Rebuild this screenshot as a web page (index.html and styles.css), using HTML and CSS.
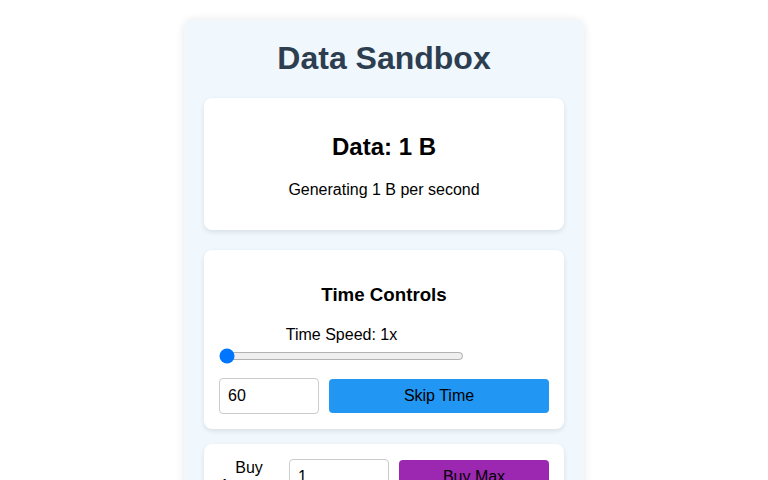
FILE: index.html
```html
<!DOCTYPE html>
<html>
<head>
<meta charset="utf-8">
<link rel="stylesheet" href="styles.css">
</head>
<body>
<div class="container">
  <h1 class="title">Data Sandbox</h1>
  <div class="card data-card">
    <h2 class="data-amount">Data: 1 B</h2>
    <p class="rate">Generating 1 B per second</p>
  </div>
  <div class="card time-card">
    <h3 class="card-title">Time Controls</h3>
    <div class="speed">
      <label class="speed-label" for="speed">Time Speed: 1x</label>
      <input class="speed-range" id="speed" type="range" min="1" max="10" value="1">
    </div>
    <div class="row">
      <input class="num-input" type="number" value="60">
      <button class="btn btn-blue">Skip Time</button>
    </div>
  </div>
  <div class="card buy-card">
    <div class="row">
      <label class="buy-label">Buy Amount:</label>
      <input class="num-input" type="number" value="1">
      <button class="btn btn-purple">Buy Max</button>
    </div>
  </div>
</div>
</body>
</html>
```
FILE: styles.css
```css
html, body {
  margin: 0;
  padding: 0;
  background: #ffffff;
}
body {
  font-family: "Liberation Sans", Arial, sans-serif;
  padding-top: 20px;
}
.container {
  width: 400px;
  box-sizing: border-box;
  margin: 0 auto;
  padding: 20px;
  background: #f0f7fd;
  border-radius: 10px;
  box-shadow: 0 0 10px rgba(0, 0, 0, 0.1);
}
.title {
  margin: 0 0 21px;
  font-size: 32px;
  text-align: center;
  color: #2c3e50;
}
.card {
  background: #ffffff;
  border-radius: 8px;
  padding: 15px;
  box-shadow: 0 2px 5px rgba(0, 0, 0, 0.1);
  text-align: center;
}
.data-card {
  margin-bottom: 20px;
}
.data-amount {
  font-size: 24px;
  margin: 20px 0;
}
.rate {
  font-size: 16px;
  margin: 16px 0;
}
.time-card {
  margin-bottom: 15px;
}
.card-title {
  font-size: 18.72px;
  margin: 18.7px 0;
}
.speed {
  display: flex;
  flex-direction: column;
  align-items: center;
  width: 245px;
  margin-bottom: 12px;
}
.speed-label {
  font-size: 16px;
  line-height: 18px;
  margin-top: 2px;
  margin-bottom: 2px;
}
.speed-range {
  width: 245px;
  margin: 2px 0;
}
.row {
  display: flex;
  align-items: center;
  gap: 10px;
}
.num-input {
  width: 100px;
  height: 36px;
  box-sizing: border-box;
  padding: 8px;
  border: 1px solid #cccccc;
  border-radius: 4px;
  font-family: "Liberation Sans", Arial, sans-serif;
  font-size: 16px;
  flex: none;
}
.btn {
  height: 34px;
  border: none;
  border-radius: 4px;
  padding: 8px;
  font-family: "Liberation Sans", Arial, sans-serif;
  font-size: 16px;
  color: #000000;
  cursor: pointer;
}
.btn-blue {
  flex: 1;
  background: #2196f3;
}
.btn-purple {
  width: 150px;
  background: #9c27b0;
  flex: none;
}
.buy-label {
  width: 60px;
  flex: none;
  font-size: 16px;
  text-align: center;
}
```
